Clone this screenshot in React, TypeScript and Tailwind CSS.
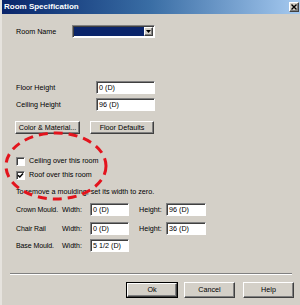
import React from 'react';

const raised =
  'border border-t-white border-l-white border-r-[#404040] border-b-[#404040] shadow-[inset_-1px_-1px_0_#808080] bg-[#d4d0c8]';
const sunken =
  'border border-t-[#808080] border-l-[#808080] border-r-white border-b-white shadow-[inset_1px_1px_0_#404040]';

function Field({ value, className = '' }: { value: string; className?: string }) {
  return (
    <div className={`${sunken} bg-white h-[13px] pl-[2px] flex items-center text-[7.2px] leading-none ${className}`}>
      {value}
    </div>
  );
}

function Button({ label, className = '' }: { label: string; className?: string }) {
  return (
    <div className={`${raised} flex items-center justify-center text-[7.2px] leading-none ${className}`}>
      {label}
    </div>
  );
}

function Checkbox({ checked, label }: { checked?: boolean; label: string }) {
  return (
    <div className="flex items-center h-[12px] gap-[4px]">
      <div className={`${sunken} bg-white w-[9px] h-[9px] flex items-center justify-center`}>
        {checked && (
          <svg width="7" height="7" viewBox="0 0 7 7">
            <path d="M1 3.2 L2.8 5 L6 1.6" fill="none" stroke="#000" strokeWidth="1.5" />
          </svg>
        )}
      </div>
      <span className="text-[7.2px] leading-none">{label}</span>
    </div>
  );
}

function MouldRow({
  name,
  width,
  height,
  className = '',
}: {
  name: string;
  width: string;
  height?: string;
  className?: string;
}) {
  return (
    <div className={`flex items-center h-[13px] ${className}`}>
      <span className="w-[46px] text-[7px] tracking-[-0.1px] leading-none whitespace-nowrap">{name}</span>
      <span className="w-[28px] text-[7px] leading-none">Width:</span>
      <Field value={width} className="w-[39px]" />
      {height && (
        <>
          <span className="ml-[10px] w-[27px] text-[7.2px] leading-none">Height:</span>
          <Field value={height} className="w-[40px]" />
        </>
      )}
    </div>
  );
}

export default function App() {
  return (
    <div className="relative w-[300px] h-[305px] overflow-hidden bg-[#d4d0c8] border-l-2 border-l-[#e6e3de] text-black font-['Liberation_Sans',Arial,sans-serif]">
      <div className="h-[14px] flex items-center justify-between pl-[2px] pr-[1px] bg-gradient-to-r from-[#0a246a] via-[#3a6ea5] to-[#a6caf0]">
        <span className="text-[8px] font-bold text-white leading-none">Room Specification</span>
        <div className={`${raised} w-[10px] h-[10px] flex items-center justify-center`}>
          <svg width="6" height="6" viewBox="0 0 6 6">
            <path d="M0.5 0.5 L5.5 5.5 M5.5 0.5 L0.5 5.5" stroke="#000" strokeWidth="1.4" />
          </svg>
        </div>
      </div>

      <div className="flex flex-col pl-[14px]">
        <div className="flex items-center h-[13px] mt-[11px]">
          <span className="w-[56px] text-[7.2px] leading-none">Room Name</span>
          <div className={`${sunken} w-[83px] h-[13px] flex items-stretch p-[1px] bg-white`}>
            <div className="flex-1 bg-[#0a246a]" />
            <div className={`${raised} w-[9px] flex items-center justify-center`}>
              <svg width="5" height="3" viewBox="0 0 5 3">
                <path d="M0 0 H5 L2.5 3 Z" fill="#000" />
              </svg>
            </div>
          </div>
        </div>

        <div className="flex items-center h-[13px] mt-[43px]">
          <span className="w-[80px] text-[7.2px] leading-none">Floor Height</span>
          <Field value="0 (D)" className="w-[59px]" />
        </div>
        <div className="flex items-center h-[13px] mt-[4px]">
          <span className="w-[80px] text-[7.2px] leading-none">Ceiling Height</span>
          <Field value="96 (D)" className="w-[59px]" />
        </div>

        <div className="flex items-center h-[13px] mt-[10px] -ml-[1px] gap-[10px]">
          <Button label="Color & Material..." className="w-[65px] h-[13px]" />
          <Button label="Floor Defaults" className="w-[64px] h-[13px]" />
        </div>

        <div className="mt-[21px]">
          <Checkbox label="Ceiling over this room" />
        </div>
        <div className="mt-[2px]">
          <Checkbox checked label="Roof over this room" />
        </div>

        <div className="mt-[6px] h-[10px] flex items-center text-[7.2px] leading-none">
          To remove a moulding, set its width to zero.
        </div>

        <MouldRow name="Crown Mould." width="0 (D)" height="96 (D)" className="mt-[6px]" />
        <MouldRow name="Chair Rail" width="0 (D)" height="36 (D)" className="mt-[6px]" />
        <MouldRow name="Base Mould." width="5 1/2 (D)" className="mt-[4px]" />
      </div>

      <div className="mt-[21px] ml-[8px] w-[282px] h-[2px] border-t border-t-[#808080] border-b border-b-white" />

      <div className="mt-[7px] flex justify-end pr-[6px] gap-[6px]">
        <div className="w-[52px] h-[16px] border border-black">
          <Button label="Ok" className="w-full h-full" />
        </div>
        <Button label="Cancel" className="w-[51px] h-[16px]" />
        <Button label="Help" className="w-[51px] h-[16px] ml-[2px]" />
      </div>

      <svg
        className="absolute left-0 top-0 pointer-events-none"
        width="300"
        height="305"
        viewBox="0 0 300 305"
      >
        <ellipse
          cx="54"
          cy="166"
          rx="50"
          ry="33"
          fill="none"
          stroke="#e3141d"
          strokeWidth="3"
          strokeDasharray="9 6"
        />
      </svg>
    </div>
  );
}
